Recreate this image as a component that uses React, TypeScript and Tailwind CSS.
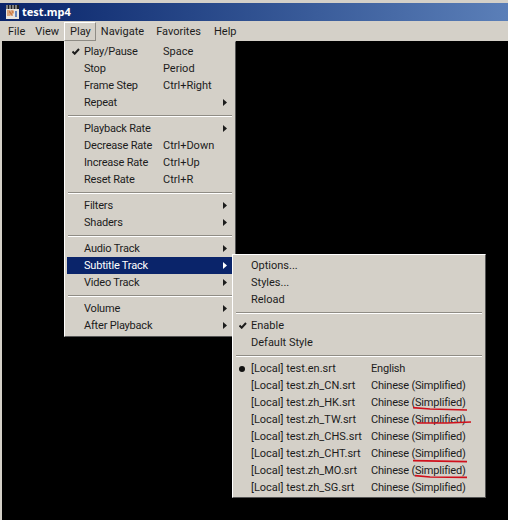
const font = "[font-family:Roboto,Tahoma,sans-serif]";

type Row = { label: string; key?: string; arrow?: boolean; check?: boolean; dot?: boolean; active?: boolean };

const playMenu: (Row | "sep")[] = [
  { label: "Play/Pause", key: "Space", check: true },
  { label: "Stop", key: "Period" },
  { label: "Frame Step", key: "Ctrl+Right" },
  { label: "Repeat", arrow: true },
  "sep",
  { label: "Playback Rate", arrow: true },
  { label: "Decrease Rate", key: "Ctrl+Down" },
  { label: "Increase Rate", key: "Ctrl+Up" },
  { label: "Reset Rate", key: "Ctrl+R" },
  "sep",
  { label: "Filters", arrow: true },
  { label: "Shaders", arrow: true },
  "sep",
  { label: "Audio Track", arrow: true },
  { label: "Subtitle Track", arrow: true, active: true },
  { label: "Video Track", arrow: true },
  "sep",
  { label: "Volume", arrow: true },
  { label: "After Playback", arrow: true },
];

const subMenu: (Row | "sep")[] = [
  { label: "Options..." },
  { label: "Styles..." },
  { label: "Reload" },
  "sep",
  { label: "Enable", check: true },
  { label: "Default Style" },
  "sep",
  { label: "[Local] test.en.srt", key: "English", dot: true },
  { label: "[Local] test.zh_CN.srt", key: "Chinese (Simplified)" },
  { label: "[Local] test.zh_HK.srt", key: "Chinese (Simplified)" },
  { label: "[Local] test.zh_TW.srt", key: "Chinese (Simplified)" },
  { label: "[Local] test.zh_CHS.srt", key: "Chinese (Simplified)" },
  { label: "[Local] test.zh_CHT.srt", key: "Chinese (Simplified)" },
  { label: "[Local] test.zh_MO.srt", key: "Chinese (Simplified)" },
  { label: "[Local] test.zh_SG.srt", key: "Chinese (Simplified)" },
];

const Check = () => (
  <svg width="8" height="7" viewBox="0 0 8 7" className="block">
    <path d="M0.5 3.5 L2.7 5.7 L7 1" fill="none" stroke="currentColor" strokeWidth="2" />
  </svg>
);

const Arrow = () => (
  <svg width="4" height="7" viewBox="0 0 4 7" className="block">
    <path d="M0 0 L4 3.5 L0 7 Z" fill="currentColor" />
  </svg>
);

const MenuRows = ({
  rows,
  iconBox,
  labelClass,
  keyClass,
}: {
  rows: (Row | "sep")[];
  iconBox: string;
  labelClass: string;
  keyClass: string;
}) => (
  <>
    {rows.map((r, i) =>
      r === "sep" ? (
        <div key={i} className="h-[9px] flex items-center px-px">
          <div className="h-[2px] w-full border-t border-[#8f8c85] border-b-white border-b" />
        </div>
      ) : (
        <div
          key={r.label}
          className={`h-[17px] flex items-center pr-[6px] ${r.active ? "bg-[#0a246a] text-white" : "text-[#1c1c1c]"}`}
        >
          <div className={`${iconBox} flex items-center shrink-0`}>
            {r.check && <Check />}
            {r.dot && <div className="w-[6px] h-[6px] rounded-full bg-[#111]" />}
          </div>
          <span className={`${labelClass} shrink-0 whitespace-nowrap`}>{r.label}</span>
          {r.key && <span className={`${keyClass} whitespace-nowrap`}>{r.key}</span>}
          {r.arrow && (
            <div className="ml-auto">
              <Arrow />
            </div>
          )}
        </div>
      ),
    )}
  </>
);

const App = () => (
  <div className={`relative w-[508px] h-[520px] overflow-hidden bg-[#d4d0c8] text-[11px] leading-none tracking-[-0.2px] ${font}`}>
    <div className="h-[3px] bg-[#d4d0c8]" />
    <div className="h-[18px] flex items-center gap-[2px] pl-[5px] bg-gradient-to-r from-[#0a246a] to-[#5b7fb8]">
      <svg width="15" height="14" viewBox="0 0 15 14" className="block">
        <rect x="1" y="0" width="13" height="4" fill="#222" />
        <path d="M2 0v4M5 0v4M8 0v4M11 0v4" stroke="#ddd" strokeWidth="1" />
        <rect x="1" y="4" width="13" height="10" fill="#e9e6df" />
        <path d="M2 6h3v2h-3M2 10h3M6 6h2v2h-2v2h2" fill="none" stroke="#c8641f" strokeWidth="1.1" />
        <path d="M11 6v6" fill="none" stroke="#2f5fb0" strokeWidth="1.4" />
      </svg>
      <span className="pb-[2px] text-white text-[11px] font-bold tracking-normal [font-family:'Noto_Sans',sans-serif]">test.mp4</span>
    </div>
    <div className="h-[20px] flex items-center pl-[2px] text-[#1c1c1c] tracking-normal">
      <span className="pl-[6px] pr-[5px]">File</span>
      <span className="px-[5px]">View</span>
      <span className="h-[19px] flex items-center pl-[5px] pr-[4px] border border-t-white border-l-white border-r-[#8f8c85] border-b-[#8f8c85]">Play</span>
      <span className="pl-[5px] pr-[7px]">Navigate</span>
      <span className="pl-[5px] pr-[8px]">Favorites</span>
      <span className="px-[5px]">Help</span>
    </div>
    <div className="ml-[2px] h-[479px] bg-black" />

    {/* Play menu */}
    <div className="absolute left-[64px] top-[41px] w-[172px] pt-px pb-[2px] px-[2px] bg-[#d4d0c8] border border-t-[#d4d0c8] border-l-white border-r-[#555] border-b-[#555]">
      <MenuRows rows={playMenu} iconBox="w-[17px] pl-[5px]" labelClass="w-[79px]" keyClass="tracking-normal" />
    </div>

    {/* Subtitle submenu */}
    <div className="absolute left-[232px] top-[254px] w-[254px] pt-[2px] pb-px px-[2px] bg-[#d4d0c8] border border-t-white border-l-white border-r-[#555] border-b-[#555]">
      <MenuRows rows={subMenu} iconBox="w-[16px] pl-[4px]" labelClass="w-[120px] tracking-normal" keyClass="" />
    </div>

    {/* Red marker underlines */}
    <svg width="508" height="520" className="absolute left-0 top-0 pointer-events-none">
      <g fill="none" stroke="#d0101c" strokeWidth="1.7">
        <path d="M413 407.7 L430 409 L467 410" />
        <path d="M417 423 L447 423 L471 422" />
        <path d="M413 460.7 L467 461.7" />
        <path d="M415 475.7 L430 477 L467 477.3" />
      </g>
    </svg>
  </div>
);

export default App;
